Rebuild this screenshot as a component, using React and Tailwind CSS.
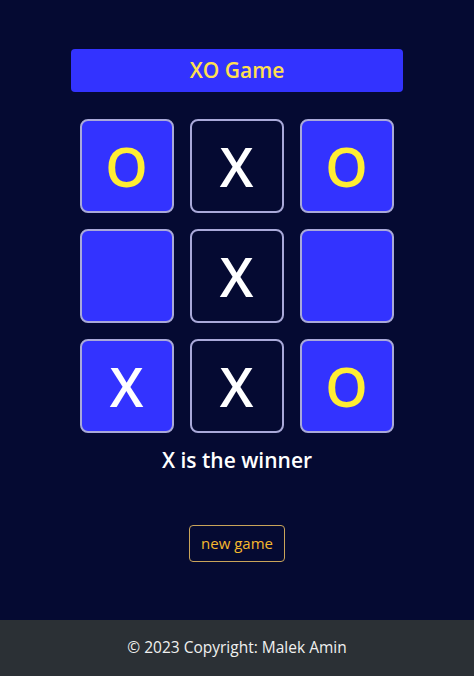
import React, { useState } from "react";

const lines = [
  [0, 1, 2], [3, 4, 5], [6, 7, 8],
  [0, 3, 6], [1, 4, 7], [2, 5, 8],
  [0, 4, 8], [2, 4, 6],
];

function getWinner(board) {
  for (const [a, b, c] of lines) {
    if (board[a] && board[a] === board[b] && board[a] === board[c]) return board[a];
  }
  return null;
}

export default function App() {
  const [board, setBoard] = useState(["O", "X", "O", "", "X", "", "X", "X", "O"]);
  const [turn, setTurn] = useState("O");
  const winner = getWinner(board);

  const play = (i) => {
    if (board[i] || winner) return;
    const next = [...board];
    next[i] = turn;
    setBoard(next);
    setTurn(turn === "X" ? "O" : "X");
  };

  const reset = () => {
    setBoard(Array(9).fill(""));
    setTurn("X");
  };

  return (
    <div
      className="min-h-screen flex flex-col bg-[#050a32] text-white"
      style={{ fontFamily: '"Open Sans", "Noto Sans", sans-serif' }}
    >
      <main className="flex-1 flex flex-col items-center">
        <h1 className="mt-[49px] w-[332px] h-[43px] flex items-center justify-center rounded-[4px] bg-[#3333ff] text-[#ffe050] text-[21px] font-semibold">
          XO Game
        </h1>
        <div className="mt-[27px] grid grid-cols-3 gap-4 w-[314px] -ml-[1px]">
          {board.map((cell, i) => {
            // middle column keeps the page colour, the rest are blue
            const dark = i === 1 || i === 4 || i === 7;
            return (
              <button
                key={i}
                onClick={() => play(i)}
                className={`h-[94px] w-[94px] rounded-[8px] border-2 border-[#a9a9d9] flex items-center justify-center text-[54px] font-semibold leading-none ${
                  dark ? "bg-[#050a32]" : "bg-[#3333ff]"
                } ${cell === "O" ? "text-[#ffee33]" : "text-white"}`}
              >
                {cell}
              </button>
            );
          })}
        </div>
        <p className="mt-[12px] text-[21px] font-semibold">
          {winner ? `${winner} is the winner` : `${turn} turn`}
        </p>
        <button
          onClick={reset}
          className="mt-[48px] h-[37px] px-[11px] rounded-[4px] border border-[#c9a45a] text-[#f5b82e] text-[15px]"
        >
          new game
        </button>
      </main>
      <footer className="mt-[57px] h-[56px] bg-[#2b3035] flex items-center justify-center text-[15.5px] text-[#f0f0f0]">
        © 2023 Copyright: Malek Amin
      </footer>
    </div>
  );
}
